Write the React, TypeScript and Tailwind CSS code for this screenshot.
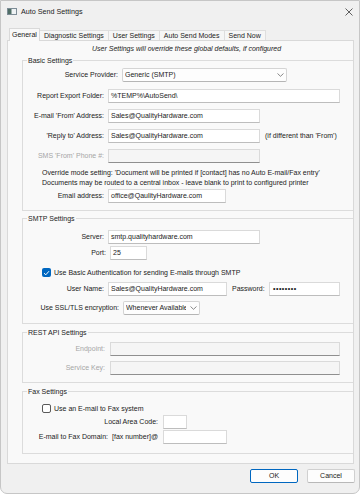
import type { ReactNode } from 'react';

const Input = ({
  className,
  value,
  disabled,
}: {
  className: string;
  value?: ReactNode;
  disabled?: boolean;
}) => (
  <div
    className={`h-[14px] shrink-0 flex items-center overflow-hidden whitespace-nowrap pl-[2px] border border-[#dadada] ${
      disabled ? 'bg-[#f5f5f5] border-b-[#8f8f8f]' : 'bg-white border-b-[#bdbdbd]'
    } ${className}`}
  >
    {value}
  </div>
);

const Chevron = () => (
  <svg width="7" height="4" viewBox="0 0 7 4" className="shrink-0">
    <path d="M0.5 0.5 L3.5 3.3 L6.5 0.5" fill="none" stroke="#6b6b6b" strokeWidth="0.8" />
  </svg>
);

const Select = ({
  className,
  value,
  textClass,
}: {
  className: string;
  value: string;
  textClass?: string;
}) => (
  <div
    className={`h-[14px] shrink-0 flex items-center pl-[2px] pr-[2px] bg-[#fdfdfd] border border-[#d4d4d4] border-b-[#b5b5b5] rounded-[2px] ${className}`}
  >
    <span className={`overflow-hidden whitespace-nowrap ${textClass ?? 'flex-1'}`}>{value}</span>
    <Chevron />
  </div>
);

const CheckBox = ({ checked }: { checked?: boolean }) =>
  checked ? (
    <div className="w-[9px] h-[9px] rounded-[2px] bg-[#0067c0] flex items-center justify-center shrink-0">
      <svg width="7" height="6" viewBox="0 0 7 6">
        <path d="M1 3.2 L2.8 4.8 L6 1.2" fill="none" stroke="#ffffff" strokeWidth="1" />
      </svg>
    </div>
  ) : (
    <div className="w-[9px] h-[9px] rounded-[2px] border border-[#5a5a5a] bg-white shrink-0" />
  );

const Group = ({
  title,
  className,
  children,
}: {
  title: string;
  className: string;
  children: ReactNode;
}) => (
  <div className={`relative ml-[14px] border-l border-y border-[#dcdcdc] flex flex-col ${className}`}>
    <span className="absolute left-[4px] top-[-5px] bg-[#f9f9f9] px-[1px] leading-[10px]">{title}</span>
    {children}
  </div>
);

const Row = ({ className, children }: { className: string; children: ReactNode }) => (
  <div className={`flex items-center h-[14px] ${className}`}>{children}</div>
);

const tabs = ['Diagnostic Settings', 'User Settings', 'Auto Send Modes', 'Send Now'];

export default function App() {
  return (
    <div className="w-[362px] h-[496px] bg-white font-['Liberation_Sans',Arial,sans-serif] text-[7px] leading-[10px] text-[#222]">
      <div className="w-[360px] h-[494px] bg-[#f0f0f0] border border-[#c6c6c6] rounded-b-[7px] flex flex-col">
        {/* title bar */}
        <div className="h-[21px] flex items-center pl-[6px] pr-[6px]">
          <svg width="10" height="7" viewBox="0 0 10 7" className="shrink-0">
            <rect x="0.5" y="0.5" width="9" height="6" fill="#eef2f4" stroke="#7d8c96" strokeWidth="1" />
            <rect x="1" y="1" width="3.5" height="5" fill="#4f6e66" />
          </svg>
          <span className="ml-[4px] text-[7.2px]">Auto Send Settings</span>
          <svg width="8" height="8" viewBox="0 0 8 8" className="ml-auto">
            <path d="M0.5 0.5 L7.5 7.5 M7.5 0.5 L0.5 7.5" stroke="#3a3a3a" strokeWidth="0.8" />
          </svg>
        </div>

        {/* tabs */}
        <div className="mt-[6px] h-[12px] ml-[8px] flex items-end relative z-10">
          <div className="h-[13px] -mb-[1px] px-[2px] bg-[#f9f9f9] border border-b-0 border-[#d9d9d9] flex items-center">
            General
          </div>
          {tabs.map((t) => (
            <div
              key={t}
              className="h-[10px] px-[4px] bg-[#f6f6f6] border-t border-r border-[#dedede] flex items-center"
            >
              {t}
            </div>
          ))}
        </div>

        {/* tab page */}
        <div className="ml-[6px] w-[347px] h-[424px] bg-[#f9f9f9] border border-[#d9d9d9] flex flex-col">
          <div className="mt-[3px] pl-[84px] italic text-[#222]">
            User Settings will override these global defaults, if configured
          </div>

          <Group title="Basic Settings" className="mt-[6px] h-[151px]">
            <Row className="mt-[7px]">
              <span className="w-[95px] text-right shrink-0">Service Provider:</span>
              <Select className="ml-[4px] w-[165px]" value="Generic (SMTP)" />
            </Row>
            <Row className="mt-[7px]">
              <span className="w-[81px] text-right shrink-0">Report Export Folder:</span>
              <Input className="ml-[4px] w-[232px]" value={'%TEMP%\\AutoSend\\'} />
            </Row>
            <Row className="mt-[6px]">
              <span className="w-[81px] text-right shrink-0">E-mail 'From' Address:</span>
              <Input className="ml-[4px] w-[152px]" value="Sales@QualityHardware.com" />
            </Row>
            <Row className="mt-[6px]">
              <span className="w-[81px] text-right shrink-0">'Reply to' Address:</span>
              <Input className="ml-[4px] w-[152px]" value="Sales@QualityHardware.com" />
              <span className="ml-[5px] whitespace-nowrap">(if different than 'From')</span>
            </Row>
            <Row className="mt-[6px]">
              <span className="w-[81px] text-right shrink-0 text-[#a6a6a6]">SMS 'From' Phone #:</span>
              <Input className="ml-[4px] w-[152px]" disabled />
            </Row>
            <div className="mt-[5px] pl-[19px] whitespace-nowrap">
              <div>Override mode setting: 'Document will be printed if [contact] has no Auto E-mail/Fax entry'</div>
              <div>Documents may be routed to a central inbox - leave blank to print to configured printer</div>
            </div>
            <Row className="mt-[1px]">
              <span className="w-[81px] text-right shrink-0">Email address:</span>
              <Input className="ml-[4px] w-[118px]" value="office@QaulityHardware.com" />
            </Row>
          </Group>

          <Group title="SMTP Settings" className="mt-[7px] h-[106px]">
            <Row className="mt-[11px]">
              <span className="w-[81px] text-right shrink-0">Server:</span>
              <Input className="ml-[4px] w-[152px]" value="smtp.qualityhardware.com" />
            </Row>
            <Row className="mt-[2px]">
              <span className="w-[83px] text-right shrink-0">Port:</span>
              <Input className="ml-[4px] w-[37px]" value="25" />
            </Row>
            <div className="mt-[8px] h-[9px] pl-[19px] flex items-center">
              <CheckBox checked />
              <span className="ml-[3px] whitespace-nowrap">Use Basic Authentication for sending E-mails through SMTP</span>
            </div>
            <Row className="mt-[5px]">
              <span className="w-[81px] text-right shrink-0">User Name:</span>
              <Input className="ml-[4px] w-[119px]" value="Sales@QualityHardware.com" />
              <span className="ml-[5px] w-[37px] shrink-0">Password:</span>
              <Input
                className="w-[71px] pl-[3px]"
                value={<span className="font-bold tracking-[0.5px]">••••••••</span>}
              />
            </Row>
            <Row className="mt-[5px]">
              <span className="w-[96px] text-right shrink-0">Use SSL/TLS encryption:</span>
              <Select
                className="ml-[4px] w-[77px]"
                value="Whenever Available"
                textClass="w-[63px] mr-[4px]"
              />
            </Row>
          </Group>

          <Group title="REST API Settings" className="mt-[8px] h-[51px]">
            <Row className="mt-[9px]">
              <span className="w-[82px] text-right shrink-0 text-[#a6a6a6]">Endpoint:</span>
              <Input className="ml-[5px] w-[230px]" disabled />
            </Row>
            <Row className="mt-[5px]">
              <span className="w-[82px] text-right shrink-0 text-[#a6a6a6]">Service Key:</span>
              <Input className="ml-[5px] w-[230px]" disabled />
            </Row>
          </Group>

          <Group title="Fax Settings" className="mt-[8px] h-[63px]">
            <div className="mt-[12px] h-[9px] pl-[19px] flex items-center">
              <CheckBox />
              <span className="ml-[3px] whitespace-nowrap">Use an E-mail to Fax system</span>
            </div>
            <Row className="mt-[2px]">
              <span className="w-[135px] text-right shrink-0">Local Area Code:</span>
              <Input className="ml-[5px] w-[24px]" />
            </Row>
            <Row className="mt-[1px]">
              <span className="w-[85px] text-right shrink-0">E-mail to Fax Domain:</span>
              <span className="ml-[4px] w-[46px] shrink-0 whitespace-nowrap">[fax number]@</span>
              <Input className="ml-[5px] w-[64px]" />
            </Row>
          </Group>
        </div>

        {/* buttons */}
        <div className="mt-[5px] flex justify-end pr-[4px] gap-[9px]">
          <div className="w-[48px] h-[14px] rounded-[2px] bg-[#fdfdfd] border border-[#0067c0] flex items-center justify-center">
            OK
          </div>
          <div className="w-[48px] h-[14px] rounded-[2px] bg-[#fdfdfd] border border-[#d0d0d0] border-b-[#b8b8b8] flex items-center justify-center">
            Cancel
          </div>
        </div>
      </div>
    </div>
  );
}
